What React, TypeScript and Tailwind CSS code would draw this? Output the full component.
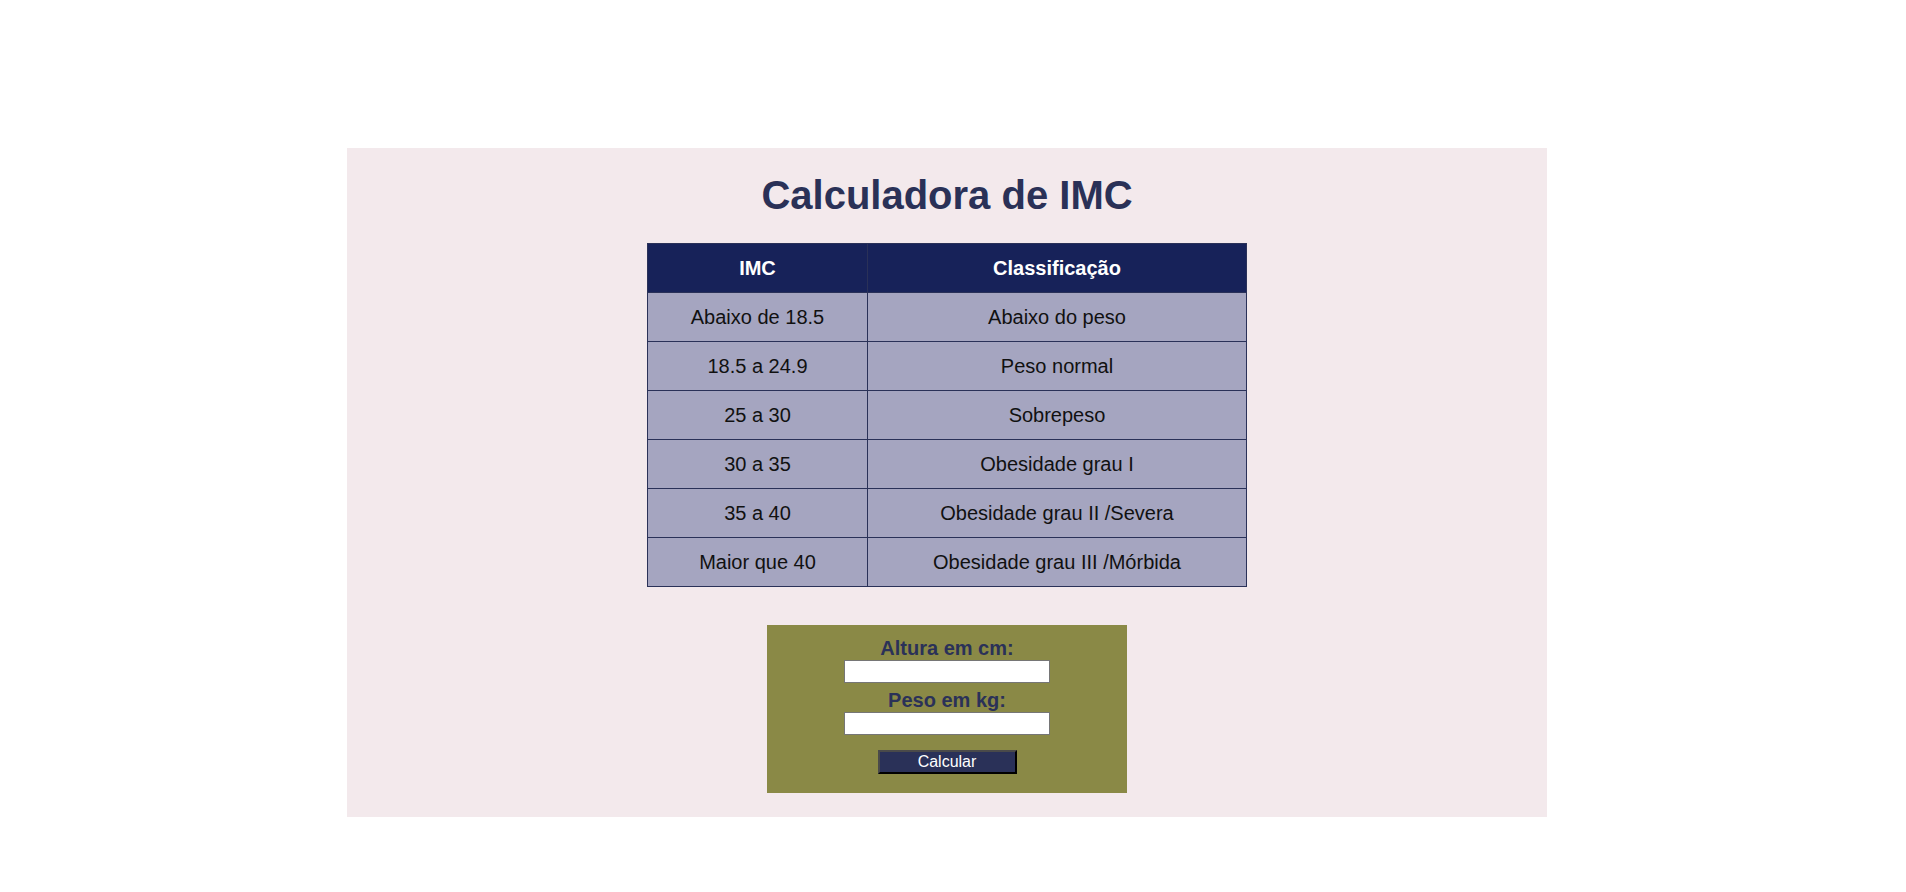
import React from "react";

const rows: [string, string][] = [
  ["Abaixo de 18.5", "Abaixo do peso"],
  ["18.5 a 24.9", "Peso normal"],
  ["25 a 30", "Sobrepeso"],
  ["30 a 35", "Obesidade grau I"],
  ["35 a 40", "Obesidade grau II /Severa"],
  ["Maior que 40", "Obesidade grau III /Mórbida"],
];

export default function App() {
  return (
    <div className="min-h-[892px] bg-white pt-[148px] font-['Liberation_Sans',Arial,sans-serif]">
      <div className="ml-[347px] flex h-[669px] w-[1200px] flex-col items-center bg-[#f3e9ec] pt-[24px]">
        <h1 className="text-[40px] font-bold leading-[46px] text-[#2a3157]">Calculadora de IMC</h1>
        <table className="mt-[25px] w-[600px] table-fixed border-collapse text-[20px]">
          <thead>
            <tr className="h-[49px] bg-[#172259] text-white">
              <th className="w-[220px] border border-[#2a3158] p-0 font-bold">IMC</th>
              <th className="border border-[#2a3158] p-0 font-bold">Classificação</th>
            </tr>
          </thead>
          <tbody>
            {rows.map(([a, b]) => (
              <tr key={a} className="h-[49px] bg-[#a5a5c0] text-[#111111]">
                <td className="border border-[#2a3158] p-0 text-center">{a}</td>
                <td className="border border-[#2a3158] p-0 text-center">{b}</td>
              </tr>
            ))}
          </tbody>
        </table>
        <div className="mt-[38px] flex w-[360px] flex-col items-center bg-[#8a8946] pb-[19px] pt-[12px]">
          <label className="text-[20px] font-bold leading-[23px] text-[#2a3158]">Altura em cm:</label>
          <input type="text" className="h-[23px] w-[206px] border border-[#767676] bg-white outline-none" />
          <label className="mt-[6px] text-[20px] font-bold leading-[23px] text-[#2a3158]">Peso em kg:</label>
          <input type="text" className="h-[23px] w-[206px] border border-[#767676] bg-white outline-none" />
          <button className="mt-[15px] h-[24px] w-[139px] border-2 border-b-black border-l-[#4a4a4a] border-r-black border-t-[#4a4a4a] bg-[#2a3158] text-[16px] leading-[18px] text-white">
            Calcular
          </button>
        </div>
      </div>
    </div>
  );
}
